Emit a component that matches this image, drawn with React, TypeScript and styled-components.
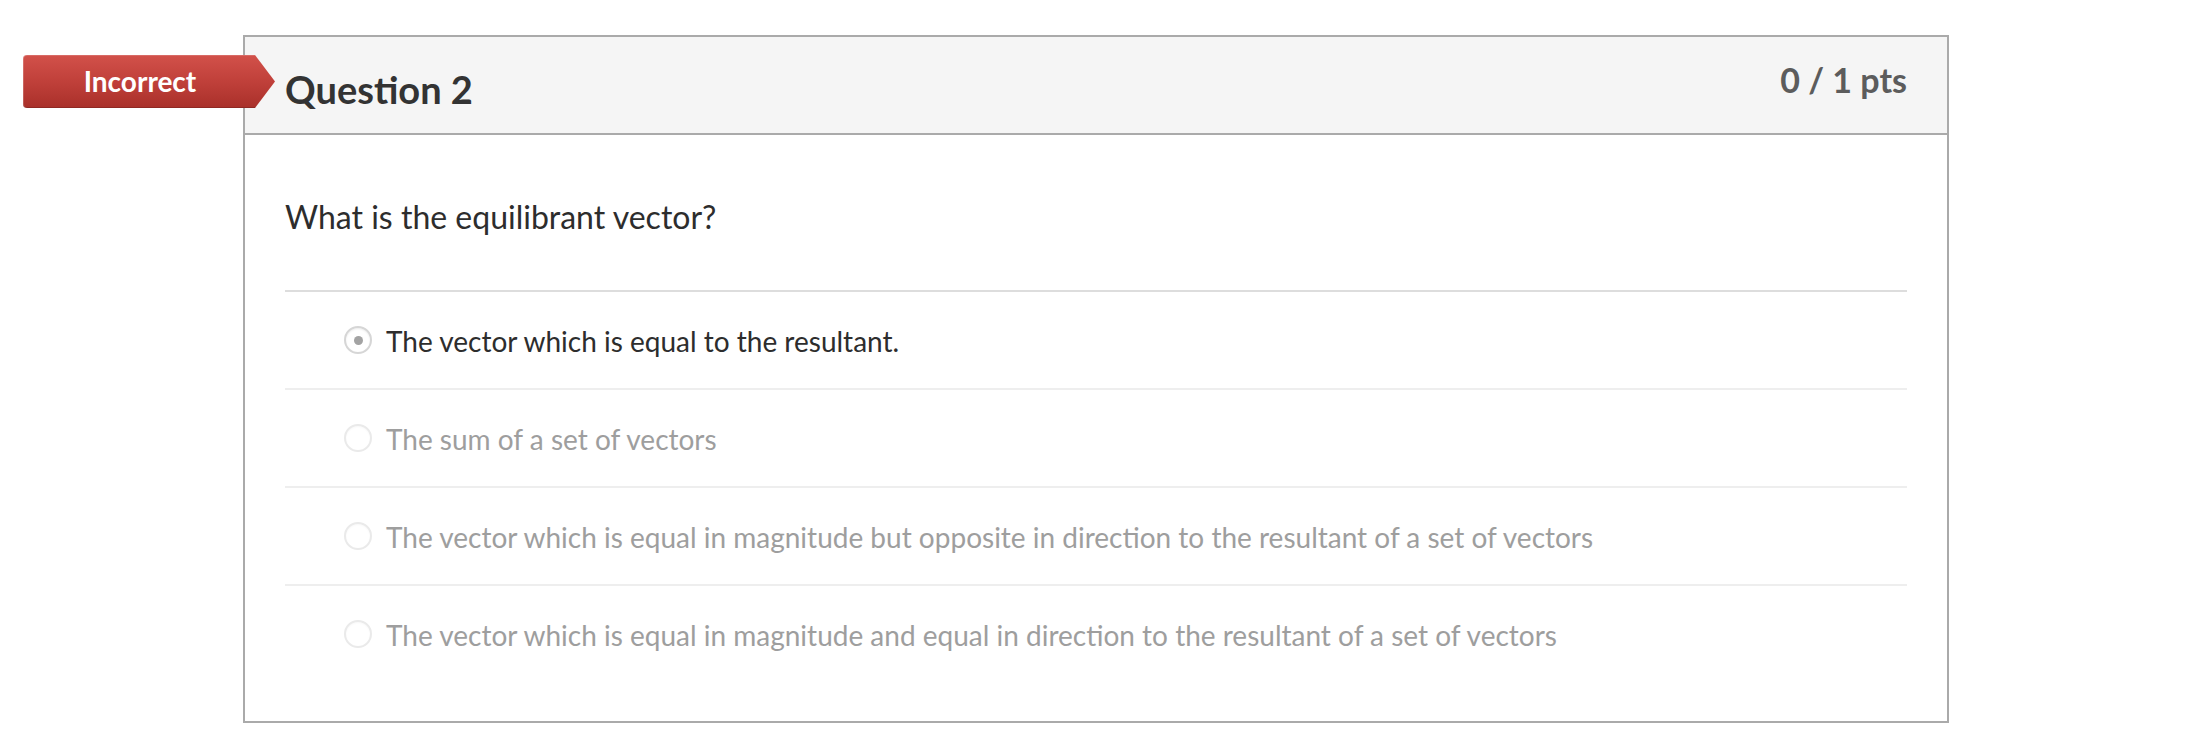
import React, { FC } from 'react'
import styled, { createGlobalStyle } from 'styled-components'

interface Answer {
  id: number
  text: string
  selected?: boolean
}

const answers: Answer[] = [
  { id: 1, text: 'The vector which is equal to the resultant.', selected: true },
  { id: 2, text: 'The sum of a set of vectors' },
  {
    id: 3,
    text: 'The vector which is equal in magnitude but opposite in direction to the resultant of a set of vectors',
  },
  {
    id: 4,
    text: 'The vector which is equal in magnitude and equal in direction to the resultant of a set of vectors',
  },
]

const GlobalStyle = createGlobalStyle`
  html, body {
    margin: 0;
    padding: 0;
    background: #fff;
    font-family: Lato, "Open Sans", "Liberation Sans", sans-serif;
  }
`

const App: FC = () => {
  return (
    <>
      <GlobalStyle />
      <Page>
        <QuestionCard>
          <ResultBadge>
            <span>Incorrect</span>
          </ResultBadge>
          <Header>
            <QuestionName>Question 2</QuestionName>
            <Points>0 / 1 pts</Points>
          </Header>
          <Body>
            <QuestionText>What is the equilibrant vector?</QuestionText>
            <AnswerList>
              {answers.map((answer) => (
                <AnswerRow key={answer.id}>
                  <Radio $selected={answer.selected} />
                  <AnswerText $selected={answer.selected}>{answer.text}</AnswerText>
                </AnswerRow>
              ))}
            </AnswerList>
          </Body>
        </QuestionCard>
      </Page>
    </>
  )
}

export default App

const Page = styled.div`
  padding: 35px 0 0 243px;
`

const QuestionCard = styled.div`
  position: relative;
  width: 1706px;
  box-sizing: border-box;
  border: 2px solid #aaaaaa;
`

const ResultBadge = styled.div`
  position: absolute;
  left: -222px;
  top: 18px;
  width: 252px;
  height: 53px;
  box-sizing: border-box;
  padding-right: 20px;
  display: flex;
  align-items: center;
  justify-content: center;
  border-radius: 4px 0 0 4px;
  background: linear-gradient(to bottom, #d2514a 0%, #c0403a 50%, #a9302a 100%);
  box-shadow: inset 1px 0 0 rgba(255, 255, 255, 0.2), inset 0 1px 0 rgba(255, 255, 255, 0.15),
    inset 0 -1px 0 rgba(0, 0, 0, 0.15);
  clip-path: polygon(0 0, 232px 0, 100% 50%, 232px 100%, 0 100%);

  span {
    color: #fff;
    font-size: 28px;
    font-weight: 700;
    line-height: 1.2;
    margin-left: 2px;
  }
`

const Header = styled.div`
  display: flex;
  justify-content: space-between;
  align-items: flex-start;
  height: 96px;
  padding: 0 40px;
  background: #f5f5f5;
  border-bottom: 2px solid #aaaaaa;
`

const QuestionName = styled.h2`
  margin: 30px 0 0;
  font-size: 38px;
  font-weight: 700;
  line-height: 1.2;
  color: #333333;
`

const Points = styled.div`
  margin-top: 23px;
  font-size: 34px;
  font-weight: 700;
  line-height: 1.2;
  color: #5c5c5c;
`

const Body = styled.div`
  padding: 0 40px 39px;
`

const QuestionText = styled.div`
  padding: 63px 0 54px;
  font-size: 32px;
  line-height: 1.2;
  color: #2d2d2d;
  border-bottom: 2px solid #dddddd;
`

const AnswerList = styled.div`
  display: flex;
  flex-direction: column;
`

const AnswerRow = styled.div`
  display: flex;
  align-items: center;
  height: 96px;
  padding-left: 59px;
  border-bottom: 2px solid #eeeeee;

  &:last-child {
    border-bottom: none;
  }
`

const Radio = styled.span<{ $selected?: boolean }>`
  position: relative;
  flex: none;
  width: 28px;
  height: 28px;
  box-sizing: border-box;
  border-radius: 50%;
  background: #fff;
  border: 2px solid ${(p) => (p.$selected ? '#d6d6d6' : '#eaeaea')};
  box-shadow: inset 0 1px 2px rgba(0, 0, 0, ${(p) => (p.$selected ? 0.08 : 0.03)});

  &::after {
    content: '';
    display: ${(p) => (p.$selected ? 'block' : 'none')};
    position: absolute;
    left: 50%;
    top: 50%;
    width: 9px;
    height: 9px;
    margin: -4.5px 0 0 -4.5px;
    border-radius: 50%;
    background: #a3a3a3;
  }
`

const AnswerText = styled.span<{ $selected?: boolean }>`
  margin-left: 14px;
  padding-top: 2px;
  font-size: 28px;
  line-height: 1.2;
  color: ${(p) => (p.$selected ? '#2d2d2d' : '#9e9e9e')};
`
